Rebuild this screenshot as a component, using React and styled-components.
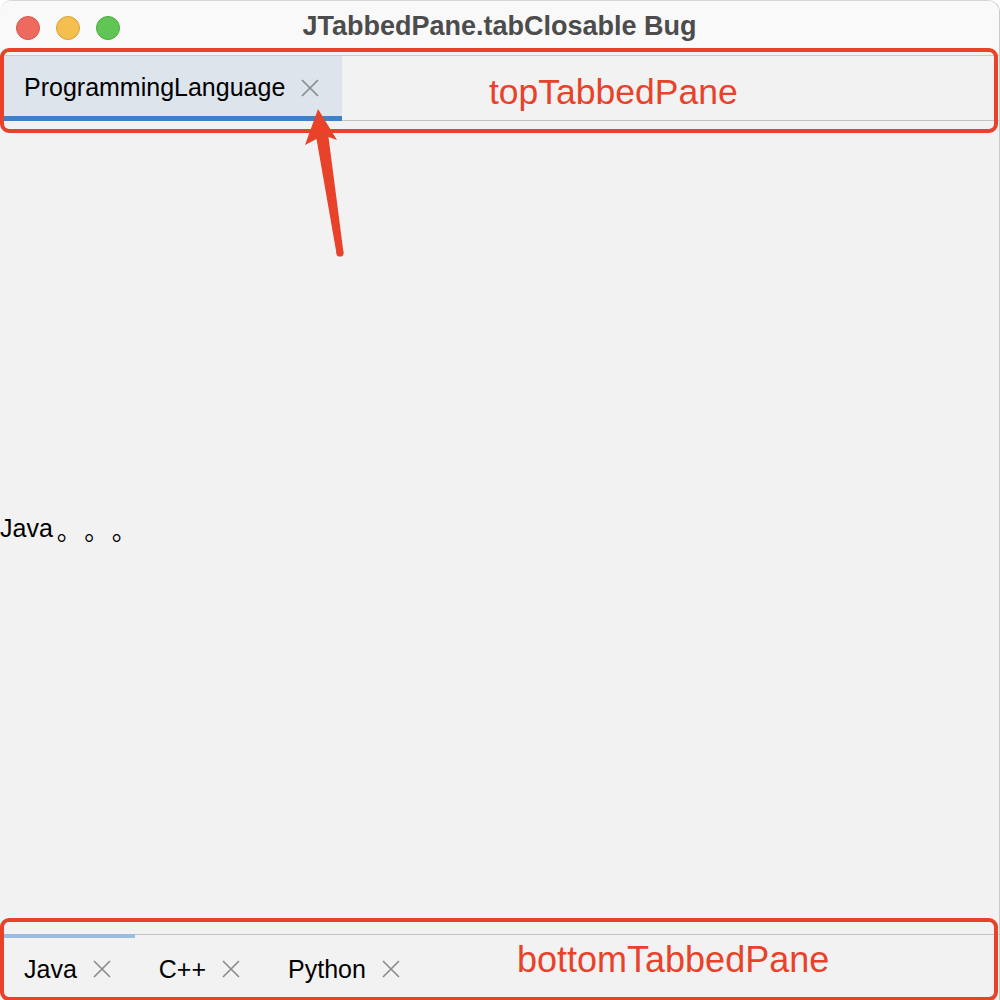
import React from "react";
import styled, { createGlobalStyle } from "styled-components";

const GlobalStyle = createGlobalStyle`
  html, body {
    margin: 0;
    padding: 0;
    background: #ffffff;
  }
  body {
    font-family: "Liberation Sans", "Noto Sans CJK SC", sans-serif;
  }
`;

const RED = "#e8432a";

const Window = styled.div`
  position: relative;
  width: 1000px;
  height: 1000px;
  box-sizing: border-box;
  display: flex;
  flex-direction: column;
  background: #f2f2f2;
  border-right: 1px solid #c9c9c9;
  border-top: 1px solid #d6d6d6;
  border-radius: 12px 12px 0 0;
  overflow: hidden;
`;

const TitleBar = styled.div`
  flex: none;
  height: 51px;
  display: grid;
  grid-template-columns: 1fr auto 1fr;
  align-items: center;
  padding-top: 3px;
  box-sizing: border-box;
  background: #f9f9f9;
`;

const Lights = styled.div`
  display: flex;
  gap: 16px;
  padding-left: 16px;
`;

const Light = styled.span`
  width: 24px;
  height: 24px;
  box-sizing: border-box;
  border-radius: 50%;
  background: ${(p) => p.$color};
  border: 1px solid ${(p) => p.$edge};
`;

const Title = styled.div`
  margin-bottom: 4px;
  font-size: 27px;
  font-weight: bold;
  color: #4c4c4c;
`;

/* tabbed panes */
const TopPane = styled.div`
  flex: none;
  padding-top: 3px;
`;

const TopStrip = styled.div`
  display: flex;
  align-items: flex-start;
  height: 64px;
  border-top: 1px solid #cacaca;
  border-bottom: 1px solid #c4c4c4;
`;

const TopTab = styled.div`
  box-sizing: border-box;
  height: 65px;
  margin-bottom: -1px;
  display: flex;
  align-items: center;
  gap: 16px;
  padding: 3px 23px 0 24px;
  background: #dde4ec;
  border-bottom: 5px solid #3d82c8;
  font-size: 25px;
  color: #000;
`;

const BottomPane = styled.div`
  flex: none;
  display: flex;
  align-items: stretch;
  height: 66px;
  box-sizing: border-box;
  border-top: 1px solid #c4c4c4;
`;

const BottomTab = styled.div`
  box-sizing: border-box;
  margin-top: -1px;
  display: flex;
  align-items: center;
  gap: 16px;
  padding: 0 24px 0 24px;
  border-top: 4px solid ${(p) => (p.$selected ? "#9bbde2" : "transparent")};
  font-size: 25px;
  color: #000;
`;

const Content = styled.div`
  flex: 1;
  display: flex;
  align-items: center;
  padding-top: 2px;
  font-size: 25px;
  color: #000;
`;

const Cjk = styled.span`
  margin-left: 4px;
  letter-spacing: 15px;
  font-family: "Noto Sans CJK JP", "Noto Sans CJK SC", sans-serif;
`;

/* red annotations drawn over the window */
const Frame = styled.div`
  position: absolute;
  left: 0;
  top: ${(p) => p.$top}px;
  width: 998px;
  height: ${(p) => p.$height}px;
  box-sizing: border-box;
  border: 4px solid ${RED};
  border-radius: 9px;
  display: flex;
  align-items: center;
  padding-left: ${(p) => p.$labelX - 4}px;
  padding-top: ${(p) => p.$shift || 0}px;
`;

const Note = styled.span`
  font-size: ${(p) => p.$size}px;
  color: ${RED};
  white-space: nowrap;
`;

const Arrow = styled.svg`
  position: absolute;
  left: 296px;
  top: 100px;
  overflow: visible;
`;

const CloseIcon = () => (
  <svg width="18" height="18" viewBox="0 0 18 18">
    <path d="M1 1 L17 17 M17 1 L1 17" stroke="#8c8c8c" strokeWidth="1.7" fill="none" />
  </svg>
);

const bottomTabs = ["Java", "C++", "Python"];

export default function App() {
  return (
    <>
      <GlobalStyle />
      <Window>
        <TitleBar>
          <Lights>
            <Light $color="#ee6a5f" $edge="#d5574c" />
            <Light $color="#f5bf4f" $edge="#d8a33c" />
            <Light $color="#61c554" $edge="#4ea942" />
          </Lights>
          <Title>JTabbedPane.tabClosable Bug</Title>
          <div />
        </TitleBar>

        <TopPane>
          <TopStrip>
            <TopTab>
              ProgrammingLanguage
              <CloseIcon />
            </TopTab>
          </TopStrip>
        </TopPane>

        <Content>
          Java<Cjk>。。。</Cjk>
        </Content>

        <BottomPane>
          {bottomTabs.map((name, i) => (
            <BottomTab key={name} $selected={i === 0}>
              {name}
              <CloseIcon />
            </BottomTab>
          ))}
        </BottomPane>

        <Frame $top={47} $height={85} $labelX={489} $shift={3}>
          <Note $size={35.5}>topTabbedPane</Note>
        </Frame>
        <Frame $top={917} $height={83} $labelX={517}>
          <Note $size={36}>bottomTabbedPane</Note>
        </Frame>

        <Arrow width="56" height="160" viewBox="296 100 56 160">
          <polygon
            points="318,108 337,139 328.5,136 343.5,251.5 336.5,252.5 316.5,138 305,144"
            fill={RED}
          />
          <circle cx="340" cy="252" r="3.6" fill={RED} />
        </Arrow>
      </Window>
    </>
  );
}
